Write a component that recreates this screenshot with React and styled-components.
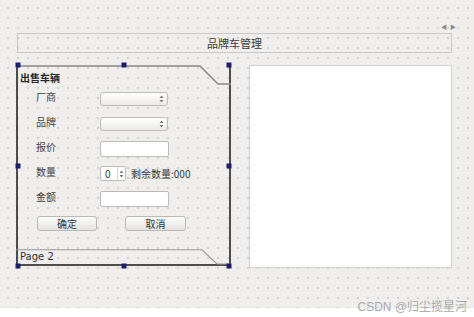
import React from "react";
import styled, { createGlobalStyle } from "styled-components";

const GlobalStyle = createGlobalStyle`
  html, body {
    margin: 0;
    padding: 0;
    background: #ffffff;
  }
  body {
    font-family: "Noto Sans CJK SC", "Noto Sans", "DejaVu Sans", sans-serif;
    color: #3a3a3a;
  }
`;

const Page = styled.div`
  width: 474px;
  height: 317px;
  position: relative;
  overflow: hidden;
`;

// designer form with dot grid
const Canvas = styled.div`
  height: 308px;
  box-sizing: border-box;
  padding: 23px 22px 0 16px;
  background-color: #efeeed;
  background-image: radial-gradient(#cfcecc 0.7px, transparent 0.8px);
  background-size: 10px 10px;
  background-position: 3px 3px;
  display: flex;
  flex-direction: column;
`;

const ArrowRow = styled.div`
  display: flex;
  justify-content: flex-end;
  gap: 3px;
  height: 8px;
  margin-right: -4px;
  color: #8a8a8a;
  font-size: 6px;
  line-height: 8px;
`;

const TitleBar = styled.div`
  margin-top: 2px;
  margin-left: 1px;
  width: 435px;
  height: 20px;
  box-sizing: border-box;
  border: 1px solid #c9c8c6;
  display: flex;
  align-items: center;
  justify-content: center;
  font-size: 11px;
  color: #3c3c3c;
`;

const MainRow = styled.div`
  margin-top: 12px;
  display: flex;
  gap: 18px;
`;

const ToolBox = styled.div`
  position: relative;
  width: 215px;
  height: 201px;
  box-sizing: border-box;
  border-left: 2px solid #4d4d4d;
  border-right: 2px solid #4d4d4d;
  display: flex;
  flex-direction: column;
`;

const Handle = styled.span`
  position: absolute;
  width: 5px;
  height: 5px;
  background: #1d1d70;
  transform: translate(-50%, -50%);
`;

const TabHeader = styled.div`
  position: relative;
  height: 19px;
  flex-shrink: 0;
  display: flex;
  align-items: flex-end;
  padding-left: 2px;
  font-size: 10px;
  font-weight: bold;
  color: #2a2a2a;
  line-height: 12px;
`;

const TabLine = styled.svg`
  position: absolute;
  left: -2px;
  top: 0;
  pointer-events: none;
`;

const FormGrid = styled.div`
  padding: 2px 0 0 18px;
  display: grid;
  grid-template-columns: 64px auto;
  grid-auto-rows: 25px;
  align-items: center;
`;

const Label = styled.span`
  font-size: 10px;
  color: #444;
  margin-bottom: 5px;
`;

const Combo = styled.div`
  width: 68px;
  height: 14px;
  box-sizing: border-box;
  border: 1px solid #bdbcba;
  border-radius: 3px;
  background: linear-gradient(#ffffff, #ebeae8);
  display: flex;
  justify-content: flex-end;
  align-items: center;
  padding-right: 3px;
`;

const LineEdit = styled.div`
  width: 69px;
  height: 16px;
  box-sizing: border-box;
  border: 1px solid #bcbbb9;
  border-radius: 2px;
  background: #fff;
`;

const SpinRow = styled.div`
  display: flex;
  align-items: center;
  gap: 5px;
  font-size: 10px;
  color: #3a3a3a;
`;

const Spin = styled.div`
  width: 26px;
  height: 15px;
  box-sizing: border-box;
  border: 1px solid #bcbbb9;
  border-radius: 2px;
  background: #fff;
  display: flex;
  align-items: center;
  font-size: 10px;
`;

const SpinValue = styled.span`
  flex: 1;
  padding-left: 4px;
`;

const SpinArrows = styled.div`
  width: 7px;
  height: 100%;
  border-left: 1px solid #d6d5d3;
  display: flex;
  align-items: center;
  justify-content: center;
`;

const ButtonRow = styled.div`
  margin-top: 5px;
  padding-left: 19px;
  display: flex;
  gap: 28px;
`;

const Button = styled.div`
  width: ${(p) => p.$w}px;
  height: 15px;
  box-sizing: border-box;
  border: 1px solid #bab9b7;
  border-radius: 3px;
  background: linear-gradient(#fbfbfb, #e5e4e2);
  display: flex;
  align-items: center;
  justify-content: center;
  font-size: 10px;
  color: #333;
`;

const TabFooter = styled.div`
  position: relative;
  margin-top: auto;
  height: 17px;
  box-sizing: border-box;
  border-bottom: 2px solid #4d4d4d;
  display: flex;
  align-items: center;
  padding-left: 2px;
  font-size: 10px;
  color: #333;
  font-family: "DejaVu Sans", "Noto Sans", sans-serif;
`;

const WhiteBox = styled.div`
  width: 203px;
  height: 203px;
  box-sizing: border-box;
  border: 1px solid #d0cfcd;
  background: #fff;
`;

const Watermark = styled.div`
  position: absolute;
  right: 7px;
  bottom: 3px;
  font-size: 12px;
  color: #a9a9a9;
  font-family: "Liberation Sans", "Noto Sans CJK SC", sans-serif;
`;

const UpDown = () => (
  <svg width="5" height="8" viewBox="0 0 5 8">
    <path d="M2.5 0.5 L4.5 3 H0.5 Z" fill="#777" />
    <path d="M2.5 7.5 L4.5 5 H0.5 Z" fill="#777" />
  </svg>
);

const handles = [
  [0, 0], [50, 0], [100, 0],
  [0, 50], [100, 50],
  [0, 100], [50, 100], [100, 100],
];

const App = () => (
  <Page>
    <GlobalStyle />
    <Canvas>
      <ArrowRow>
        <span>◀</span>
        <span>▶</span>
      </ArrowRow>
      <TitleBar>品牌车管理</TitleBar>
      <MainRow>
        <ToolBox>
          <TabHeader>
            <TabLine width="215" height="20" viewBox="0 0 215 20">
              <path d="M0 1 H184 L202 19 H215" fill="none" stroke="#8a8a8a" strokeWidth="1.5" />
            </TabLine>
            出售车辆
          </TabHeader>
          <FormGrid>
            <Label>厂商</Label>
            <Combo><UpDown /></Combo>
            <Label>品牌</Label>
            <Combo><UpDown /></Combo>
            <Label>报价</Label>
            <LineEdit />
            <Label>数量</Label>
            <SpinRow>
              <Spin>
                <SpinValue>0</SpinValue>
                <SpinArrows><UpDown /></SpinArrows>
              </Spin>
              剩余数量:000
            </SpinRow>
            <Label>金额</Label>
            <LineEdit />
          </FormGrid>
          <ButtonRow>
            <Button $w={60}>确定</Button>
            <Button $w={61}>取消</Button>
          </ButtonRow>
          <TabFooter>
            <TabLine width="215" height="16" viewBox="0 0 215 16">
              <path d="M0 0.75 H186 L201 15 H215" fill="none" stroke="#9a9a9a" strokeWidth="1.2" />
            </TabLine>
            Page 2
          </TabFooter>
          {handles.map(([x, y], i) => (
            <Handle key={i} style={{ left: `${x}%`, top: `${y}%` }} />
          ))}
        </ToolBox>
        <WhiteBox />
      </MainRow>
    </Canvas>
    <Watermark>CSDN @归尘揽星河</Watermark>
  </Page>
);

export default App;
